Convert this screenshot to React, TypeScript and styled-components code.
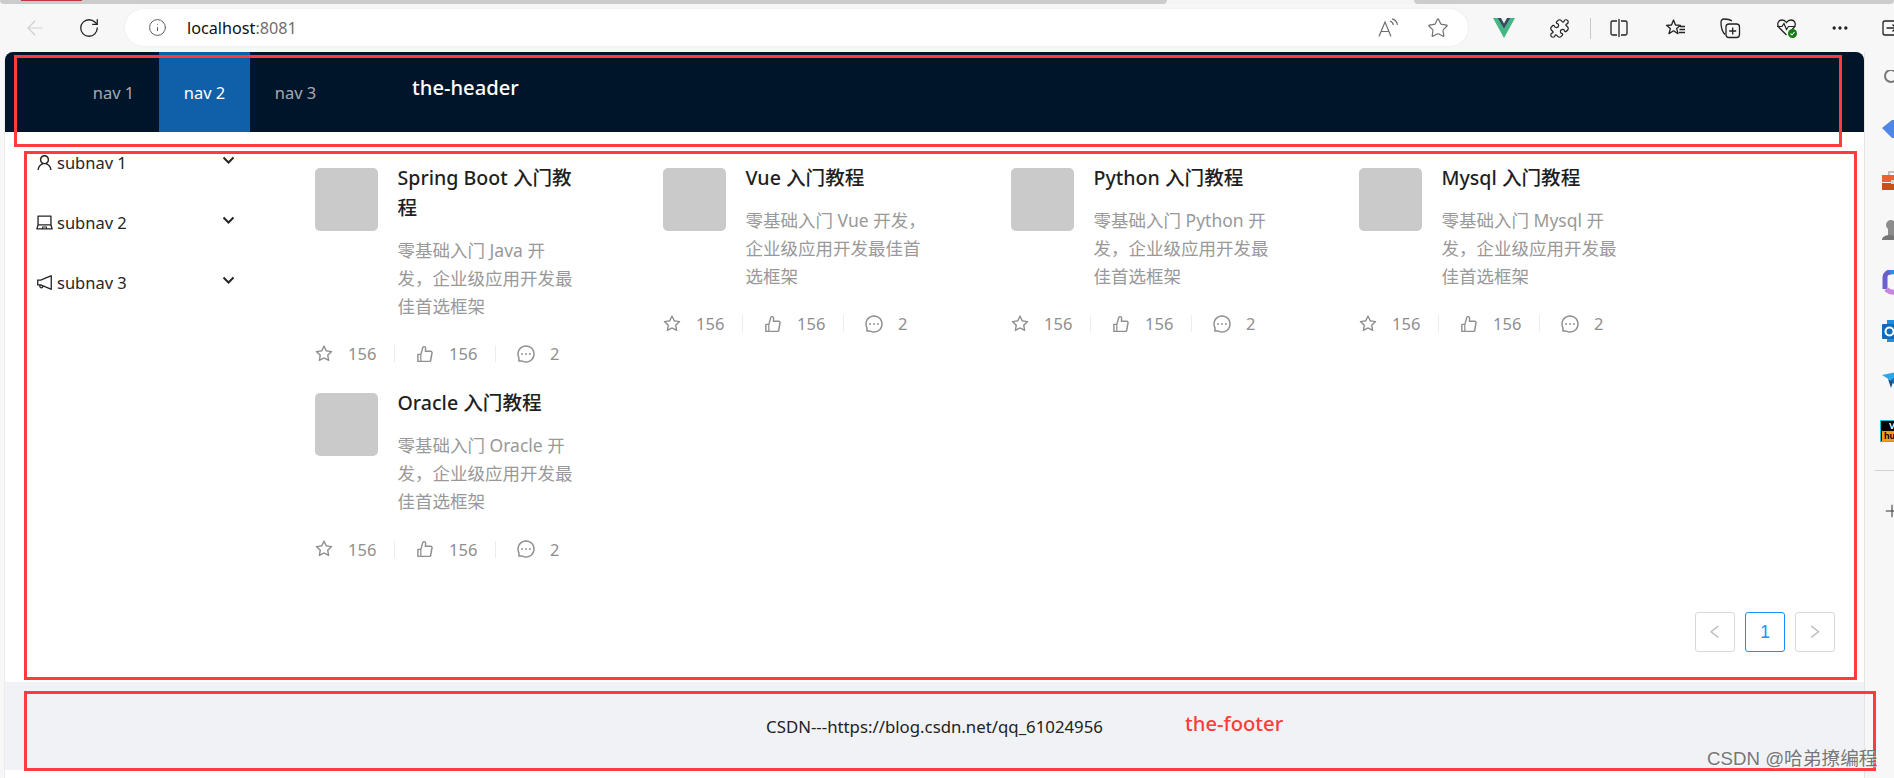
import styled, { createGlobalStyle } from "styled-components";
import {
  AiOutlineStar,
  AiOutlineLike,
  AiOutlineMessage,
  AiOutlineUser,
  AiOutlineLaptop,
  AiOutlineNotification,
  AiOutlineLeft,
  AiOutlineRight,
} from "react-icons/ai";
import { ArrowLeft, RotateCw, Info, Star, Puzzle, MoreHorizontal, Plus } from "lucide-react";

const FONT = `"Noto Sans", "Noto Sans CJK SC", sans-serif`;

const GlobalStyle = createGlobalStyle`
  html, body { margin: 0; padding: 0; background: #f7f7f7; overflow: hidden; }
  * { box-sizing: border-box; }
  body { font-family: ${FONT}; }
`;

const Page = styled.div`
  position: relative;
  width: 1894px;
  height: 778px;
  overflow: hidden;
  display: flex;
  flex-direction: column;
  background: #f7f7f7;
`;

/* browser chrome */
const TabStrip = styled.div`
  height: 4px;
  flex: none;
  display: flex;
`;
const TabPiece = styled.div<{ $w?: number; $light?: boolean }>`
  position: relative;
  ${(p) => (p.$w ? `width: ${p.$w}px;` : "flex: 1;")}
  background: ${(p) => (p.$light ? "#f5f5f5" : "#cccccc")};
  border-radius: ${(p) => (p.$light ? "0" : "0 0 6px 6px")};
`;
const ActiveTabMark = styled.div`
  height: 1px;
  width: 61px;
  margin-left: 21px;
  background: #c4363c;
`;
const Toolbar = styled.div`
  height: 48px;
  flex: none;
  display: flex;
  align-items: center;
  color: #222;
`;
const NavButton = styled.div<{ $w: number; $muted?: boolean }>`
  width: ${(p) => p.$w}px;
  flex: none;
  display: flex;
  justify-content: center;
  align-items: center;
  color: ${(p) => (p.$muted ? "#cfcfcf" : "#222")};
`;
const AddressBar = styled.div`
  width: 1343px;
  height: 37px;
  margin-left: 17px;
  margin-top: -1px;
  flex: none;
  display: flex;
  align-items: center;
  padding: 0 19px 0 23px;
  background: #fff;
  border-radius: 19px;
  box-shadow: 0 0 3px rgba(0, 0, 0, 0.06);
`;
const Url = styled.div`
  margin-left: 20px;
  flex: 1;
  font-size: 16.2px;
  color: #111;
  span {
    color: #6f6f6f;
  }
`;
const AddressAction = styled.div`
  margin-left: 28px;
  display: flex;
  color: #6e6e6e;
`;
const ToolDivider = styled.div`
  width: 1px;
  height: 21px;
  background: #c8c8c8;
  flex: none;
`;

/* page in the browser */
const Below = styled.div`
  flex: 1;
  display: flex;
  min-height: 0;
`;
const Viewport = styled.div`
  width: 1861px;
  margin-left: 4px;
  flex: none;
  display: flex;
  flex-direction: column;
  background: #fff;
  border-right: 1px solid #e4e4e4;
  border-left: 1px solid #ececec;
`;
const Header = styled.header`
  height: 80px;
  flex: none;
  display: flex;
  padding-left: 63px;
  background: #001529;
  border-radius: 8px 8px 0 0;
`;
const NavItem = styled.div<{ $active?: boolean }>`
  width: 91px;
  display: flex;
  align-items: center;
  justify-content: center;
  font-size: 16.5px;
  color: ${(p) => (p.$active ? "#fff" : "rgba(255, 255, 255, 0.65)")};
  background: ${(p) => (p.$active ? "#105fa9" : "transparent")};
`;
const Main = styled.main`
  height: 550px;
  flex: none;
  display: flex;
`;
const Sider = styled.aside`
  width: 310px;
  flex: none;
  padding: 6px 0 0 30px;
`;
const SubNav = styled.div`
  width: 200px;
  height: 48px;
  margin-bottom: 12px;
  display: flex;
  align-items: center;
  font-size: 16.5px;
  color: #262626;
`;
const SubNavIcon = styled.span`
  display: flex;
  font-size: 19px;
  margin-right: 3px;
`;
const SubNavLabel = styled.span`
  flex: 1;
`;
const Chevron = styled.svg`
  width: 13px;
  height: 9px;
  margin-top: -3px;
`;
const Content = styled.section`
  flex: 1;
  display: flex;
  flex-direction: column;
  padding: 31px 29px 30px 0;
`;
const CardList = styled.div`
  width: 1392px;
  display: flex;
  flex-wrap: wrap;
  align-items: flex-start;
`;
const Card = styled.article`
  width: 348px;
  margin-bottom: 21px;
`;
const CardTop = styled.div`
  display: flex;
`;
const Thumb = styled.div`
  width: 63px;
  height: 63px;
  margin-top: 5px;
  margin-right: 19.5px;
  flex: none;
  background: #cacaca;
  border-radius: 5px;
`;
const CardBody = styled.div`
  width: 181.5px;
`;
const CardTitle = styled.h4`
  margin: 0 0 14px;
  font-size: 19.6px;
  line-height: 30px;
  font-weight: 500;
  color: #1f1f1f;
`;
const CardDesc = styled.p`
  margin: 0 0 20px;
  font-size: 17.5px;
  line-height: 27.8px;
  color: #999;
`;
const Actions = styled.div`
  display: flex;
  align-items: center;
  height: 27px;
  font-size: 16.5px;
  color: #8f8f8f;
`;
const Action = styled.div<{ $w: number }>`
  width: ${(p) => p.$w}px;
  display: flex;
  align-items: center;
  gap: 14px;
  height: 17px;
  border-right: 1px solid #ececec;
  &:last-child {
    border-right: none;
  }
  & + & {
    padding-left: 21px;
  }
  svg {
    font-size: 20px;
    flex: none;
    margin-left: -1px;
  }
`;
const Pager = styled.div`
  margin-top: auto;
  display: flex;
  justify-content: flex-end;
  gap: 10px;
`;
const PageBtn = styled.div<{ $active?: boolean }>`
  width: 40px;
  height: 40px;
  display: flex;
  align-items: center;
  justify-content: center;
  font-size: 17.5px;
  font-family: "Liberation Sans", sans-serif;
  color: ${(p) => (p.$active ? "#1890ff" : "#bdbdbd")};
  border: 1px solid ${(p) => (p.$active ? "#1890ff" : "#d9d9d9")};
  border-radius: 3px;
`;
const Footer = styled.footer`
  height: 88px;
  flex: none;
  display: flex;
  align-items: center;
  justify-content: center;
  font-size: 16.8px;
  color: #222;
  background: #f0f2f5;
`;

/* right rail of the browser */
const Rail = styled.div`
  flex: 1;
  overflow: hidden;
  padding: 18px 0 0 17px;
  display: flex;
  flex-direction: column;
`;
const RailItem = styled.div`
  height: 50px;
  flex: none;
  width: 24px;
  svg {
    display: block;
  }
`;
const RailVi = styled.div`
  width: 24px;
  height: 22px;
  margin: 0 0 28px -2px;
  flex: none;
  background: #000;
  border: 1px solid #19c8d8;
  color: #fff;
  font: 700 9px/10px "Liberation Sans", sans-serif;
  padding-left: 8px;
  span {
    display: block;
    color: #000;
    background: #f59b1b;
    margin-left: -7px;
    padding-left: 2px;
  }
`;
const RailDivider = styled.div`
  height: 1px;
  flex: none;
  margin: 0 0 30px -7px;
  width: 30px;
  background: #d2d2d2;
`;

/* red marks drawn over the screenshot */
const Mark = styled.div<{ $l: number; $t: number; $w: number; $h: number }>`
  position: absolute;
  left: ${(p) => p.$l}px;
  top: ${(p) => p.$t}px;
  width: ${(p) => p.$w}px;
  height: ${(p) => p.$h}px;
  border: 3px solid #ff3b3b;
  pointer-events: none;
`;
const MarkLabel = styled.div<{ $l: number; $t: number; $red?: boolean }>`
  position: absolute;
  left: ${(p) => p.$l}px;
  top: ${(p) => p.$t}px;
  font-size: 20.2px;
  line-height: 26px;
  font-weight: 500;
  color: ${(p) => (p.$red ? "#ff3b3b" : "#fff")};
`;
const Watermark = styled.div`
  position: absolute;
  left: 1707px;
  top: 747px;
  font-family: "Liberation Sans", "Noto Sans CJK SC", sans-serif;
  font-size: 18.7px;
  line-height: 24px;
  color: #777;
  text-shadow: 1px 1px 1px rgba(255, 255, 255, 0.7);
  white-space: nowrap;
`;

const courses = [
  { name: "Spring Boot", lang: "Java" },
  { name: "Vue", lang: "Vue" },
  { name: "Python", lang: "Python" },
  { name: "Mysql", lang: "Mysql" },
  { name: "Oracle", lang: "Oracle" },
];

const subNavs = [
  { label: "subnav 1", icon: <AiOutlineUser /> },
  { label: "subnav 2", icon: <AiOutlineLaptop /> },
  { label: "subnav 3", icon: <AiOutlineNotification /> },
];

function VueLogo() {
  return (
    <svg width="22" height="20" viewBox="0 0 22 20">
      <polygon points="0,0 4.5,0 11,11 17.500,0 22,0 11,20" fill="#41b883" />
      <polygon points="4.500,0 8,0 11,5.500 14,0 17.500,0 11,11" fill="#35495e" />
    </svg>
  );
}

function SplitIcon() {
  return (
    <svg width="20" height="20" viewBox="0 0 20 20" fill="none" stroke="#222" strokeWidth="1.3">
      <path d="M8 3H3.500A1.500 1.500 0 0 0 2 4.500v11A1.500 1.500 0 0 0 3.500 17H8" />
      <path d="M12 3h4.500A1.500 1.500 0 0 1 18 4.500v11a1.500 1.500 0 0 1-1.500 1.500H12" />
      <path d="M10 1v18" />
    </svg>
  );
}

function FavoritesIcon() {
  return (
    <svg width="22" height="20" viewBox="0 0 22 20" fill="none" stroke="#222" strokeWidth="1.3">
      <path d="M8.500 2l2 5 5 .3-3.800 3.300 1.300 5-4.500-2.800L4 15.600l1.300-5L1.500 7.300l5-.3z" strokeLinejoin="round" />
      <path d="M15 8.500h5M14.500 11.500h5.500M14 14.500h6" />
    </svg>
  );
}

function CollectionsIcon() {
  return (
    <svg width="22" height="22" viewBox="0 0 22 22" fill="none" stroke="#222" strokeWidth="1.3">
      <path d="M6 17.500C3.500 15 2 10 2 5.500 2 3.500 3 2 5 2c3 0 6 .5 8 2" />
      <rect x="7" y="7" width="13.500" height="13.500" rx="3" />
      <path d="M13.700 10.500v7M10.200 14h7" />
    </svg>
  );
}

function HeartBadgeIcon() {
  return (
    <svg width="22" height="22" viewBox="0 0 22 22" fill="none">
      <path
        d="M10.500 18L3 10.500C.5 7.500 2 3 6 3c2 0 3.500 1 4.500 2.500C11.500 4 13 3 15 3c4 0 5.500 4.500 3 7.500l-2 2"
        stroke="#222"
        strokeWidth="1.3"
      />
      <path d="M1 9.500h5l2-3 2.500 6 2-3h7" stroke="#222" strokeWidth="1.2" />
      <circle cx="16.500" cy="16.500" r="4.500" fill="#107c10" />
      <path d="M14.500 16.500l1.500 1.500 2.500-3" stroke="#fff" strokeWidth="1.100" />
    </svg>
  );
}

function ExitIcon() {
  return (
    <svg width="18" height="18" viewBox="0 0 18 18" fill="none" stroke="#222" strokeWidth="1.3">
      <path d="M18 2H3a2 2 0 0 0-2 2v10a2 2 0 0 0 2 2h15" />
      <path d="M4.500 9h9M10.500 5.500L14 9l-3.500 3.500" />
    </svg>
  );
}

function ReadAloudIcon() {
  return (
    <svg width="21" height="20" viewBox="0 0 21 20" fill="none" stroke="#6e6e6e" strokeWidth="1.2">
      <path d="M1 18.500L7 4l6 14.500M3 13.500h8" />
      <path d="M12 3c2 .5 3 2 3.300 4M14 .8c3 .7 5 3 5.500 6" />
    </svg>
  );
}

function App() {
  return (
    <Page>
      <GlobalStyle />
      <TabStrip>
        <TabPiece $w={1167}>
          <ActiveTabMark />
        </TabPiece>
        <TabPiece $w={247} $light />
        <TabPiece />
      </TabStrip>
      <Toolbar>
        <NavButton $w={70} $muted>
          <ArrowLeft size={24} strokeWidth={1.2} />
        </NavButton>
        <NavButton $w={38}>
          <RotateCw size={22} strokeWidth={1.4} />
        </NavButton>
        <AddressBar>
          <Info size={19} strokeWidth={1.2} color="#555" />
          <Url>
            localhost<span>:8081</span>
          </Url>
          <AddressAction>
            <ReadAloudIcon />
          </AddressAction>
          <AddressAction>
            <Star size={22} strokeWidth={1.3} />
          </AddressAction>
        </AddressBar>
        <NavButton $w={72}>
          <VueLogo />
        </NavButton>
        <NavButton $w={38}>
          <Puzzle size={21} strokeWidth={1.4} />
        </NavButton>
        <NavButton $w={24}>
          <ToolDivider />
        </NavButton>
        <NavButton $w={34}>
          <SplitIcon />
        </NavButton>
        <NavButton $w={80}>
          <FavoritesIcon />
        </NavButton>
        <NavButton $w={28}>
          <CollectionsIcon />
        </NavButton>
        <NavButton $w={86}>
          <HeartBadgeIcon />
        </NavButton>
        <NavButton $w={20}>
          <MoreHorizontal size={20} strokeWidth={2} />
        </NavButton>
        <NavButton $w={82}>
          <ExitIcon />
        </NavButton>
      </Toolbar>
      <Below>
        <Viewport>
          <Header>
            <NavItem>nav 1</NavItem>
            <NavItem $active>nav 2</NavItem>
            <NavItem>nav 3</NavItem>
          </Header>
          <Main>
            <Sider>
              {subNavs.map((s) => (
                <SubNav key={s.label}>
                  <SubNavIcon>{s.icon}</SubNavIcon>
                  <SubNavLabel>{s.label}</SubNavLabel>
                  <Chevron viewBox="0 0 13 9" fill="none" stroke="#262626" strokeWidth="2">
                    <path d="M1.500 1.500l5 5 5-5" />
                  </Chevron>
                </SubNav>
              ))}
            </Sider>
            <Content>
              <CardList>
                {courses.map((c) => (
                  <Card key={c.name}>
                    <CardTop>
                      <Thumb />
                      <CardBody>
                        <CardTitle>{c.name} 入门教程</CardTitle>
                        <CardDesc>零基础入门 {c.lang} 开发，企业级应用开发最佳首选框架</CardDesc>
                      </CardBody>
                    </CardTop>
                    <Actions>
                      <Action $w={80}>
                        <AiOutlineStar />
                        156
                      </Action>
                      <Action $w={101}>
                        <AiOutlineLike />
                        156
                      </Action>
                      <Action $w={70}>
                        <AiOutlineMessage />2
                      </Action>
                    </Actions>
                  </Card>
                ))}
              </CardList>
              <Pager>
                <PageBtn>
                  <AiOutlineLeft />
                </PageBtn>
                <PageBtn $active>1</PageBtn>
                <PageBtn>
                  <AiOutlineRight />
                </PageBtn>
              </Pager>
            </Content>
          </Main>
          <Footer>CSDN---https://blog.csdn.net/qq_61024956</Footer>
        </Viewport>
        <Rail>
          <RailItem>
            <svg width="20" height="20" viewBox="0 0 20 20" fill="none" stroke="#777" strokeWidth="2">
              <circle cx="9" cy="6" r="6" />
            </svg>
          </RailItem>
          <RailItem>
            <svg width="24" height="24" viewBox="0 0 24 24">
              <polygon points="0,8 10,0 24,0 24,18 10,18" fill="#4f86e8" />
            </svg>
          </RailItem>
          <RailItem>
            <svg width="24" height="22" viewBox="0 0 24 22" fill="none">
              <path d="M7 5V2h8v3" stroke="#c0c0c0" strokeWidth="2" />
              <rect y="5" width="24" height="7" fill="#e8642a" />
              <rect y="13" width="24" height="7" fill="#c9501c" />
              <rect x="9" y="10" width="5" height="4" fill="#d6d6d6" />
            </svg>
          </RailItem>
          <RailItem>
            <svg width="24" height="24" viewBox="0 0 24 24">
              <circle cx="9" cy="5" r="5" fill="#8d8d8d" />
              <rect x="6" y="9" width="7" height="6" fill="#8d8d8d" />
              <path d="M0 20c0-3 3-5 9-5s9 2 9 5z" fill="#777" />
            </svg>
          </RailItem>
          <RailItem>
            <svg width="24" height="26" viewBox="0 0 24 26" fill="none">
              <path d="M3 19V7c0-3 3-5 6-5" stroke="#6a5fd0" strokeWidth="5" />
              <path d="M8 2c4-1 8 0 12 3" stroke="#2f8ee0" strokeWidth="5" />
              <path d="M4 19c4 4 9 4 14 2" stroke="#c685e0" strokeWidth="5" />
            </svg>
          </RailItem>
          <RailItem>
            <svg width="24" height="24" viewBox="0 0 24 24">
              <rect x="5" y="0" width="19" height="22" fill="#1d8fe0" />
              <rect x="0" y="4" width="15" height="15" rx="1" fill="#0f6cbd" />
              <circle cx="7.500" cy="11.500" r="4" fill="none" stroke="#fff" strokeWidth="2" />
            </svg>
          </RailItem>
          <RailItem>
            <svg width="24" height="20" viewBox="0 0 24 20">
              <polygon points="0,5 24,0 8,10" fill="#29a8e8" />
              <polygon points="8,10 24,0 14,16" fill="#0f6cbd" />
              <polygon points="6,9 9,18 11,12" fill="#12508c" />
            </svg>
          </RailItem>
          <RailVi>
            Vi
            <span>hu</span>
          </RailVi>
          <RailDivider />
          <Plus size={20} strokeWidth={1.2} color="#333" />
        </Rail>
      </Below>

      <Mark $l={14} $t={55} $w={1828} $h={92} />
      <Mark $l={24} $t={151} $w={1833} $h={529} />
      <Mark $l={24} $t={691} $w={1852} $h={80} />
      <MarkLabel $l={412} $t={74}>the-header</MarkLabel>
      <MarkLabel $l={1185} $t={710} $red>the-footer</MarkLabel>
      <Watermark>CSDN @哈弟撩编程</Watermark>
    </Page>
  );
}

export default App;
